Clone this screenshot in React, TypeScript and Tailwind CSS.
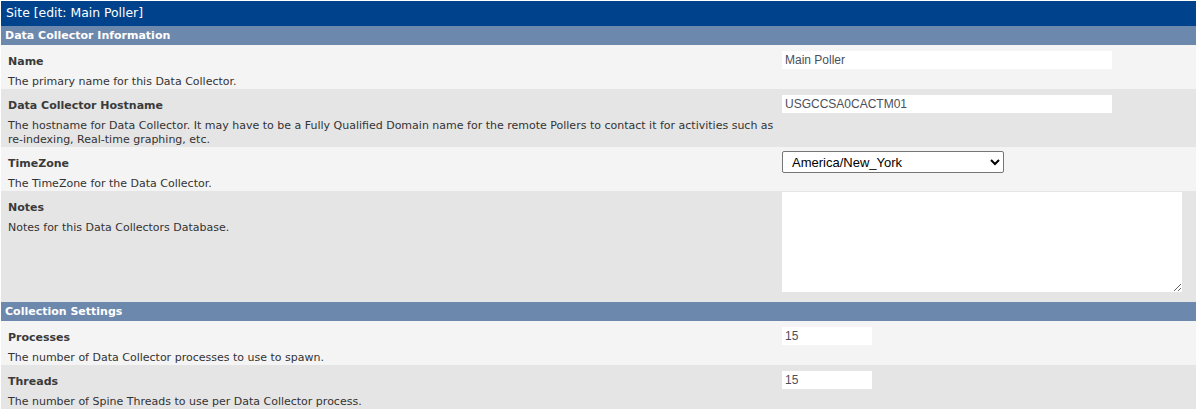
import type { ReactNode } from "react";

const font = { fontFamily: "Verdana, 'DejaVu Sans', sans-serif" };

function SectionBar({ title }: { title: string }) {
  return (
    <div className="h-[19px] bg-[#6d88ad] pl-[4px] text-[11px] font-bold leading-[19px] text-white">
      {title}
    </div>
  );
}

function Row({
  label,
  desc,
  even,
  children,
  rightClass,
}: {
  label: string;
  desc: string;
  even?: boolean;
  children: ReactNode;
  rightClass: string;
}) {
  return (
    <div className={`flex ${even ? "bg-[#e5e5e5]" : "bg-[#f4f4f4]"}`}>
      <div className="w-[781px] shrink-0 pl-[7px] pr-[4px] pt-[10px]">
        <div className="text-[11px] font-bold leading-[13px] text-[#3a3a3a]">{label}</div>
        <div className="mt-[7px] text-[11px] leading-[14px] text-[#333]">{desc}</div>
      </div>
      <div className={`flex-1 ${rightClass}`}>{children}</div>
    </div>
  );
}

const inputCls =
  "block h-[18px] bg-white px-[3px] text-[12px] text-[#4a4f5a] outline-none";
const inputFont = { fontFamily: "'Liberation Sans', Arial, sans-serif" };

export default function App() {
  return (
    <div className="min-h-screen bg-white pt-[1px] pl-[1px] pr-[2px]" style={font}>
      <div className="h-[25px] bg-[#00438c] pl-[5px] text-[12.4px] leading-[24px] text-white">
        Site [edit: Main Poller]
      </div>
      <SectionBar title="Data Collector Information" />
      <Row label="Name" desc="The primary name for this Data Collector." rightClass="pt-[6px]">
        <input
          className={`${inputCls} w-[330px]`}
          style={inputFont}
          defaultValue="Main Poller"
        />
      </Row>
      <Row
        even
        label="Data Collector Hostname"
        desc="The hostname for Data Collector. It may have to be a Fully Qualified Domain name for the remote Pollers to contact it for activities such as re-indexing, Real-time graphing, etc."
        rightClass="pt-[6px]"
      >
        <input
          className={`${inputCls} w-[330px]`}
          style={inputFont}
          defaultValue="USGCCSA0CACTM01"
        />
      </Row>
      <Row label="TimeZone" desc="The TimeZone for the Data Collector." rightClass="pt-[4px]">
        <select
          className="block h-[22px] w-[222px] rounded-[2px] border border-[#767676] bg-white pl-[5px] text-[13px] text-black"
          style={inputFont}
          defaultValue="America/New_York"
        >
          <option>America/New_York</option>
          <option>America/Chicago</option>
          <option>UTC</option>
        </select>
      </Row>
      <Row
        even
        label="Notes"
        desc="Notes for this Data Collectors Database."
        rightClass="pt-[1px] pb-[10px]"
      >
        <textarea
          className="block h-[100px] w-[400px] bg-white p-[3px] text-[12px] text-[#555] outline-none"
          style={inputFont}
        />
      </Row>
      <SectionBar title="Collection Settings" />
      <Row
        label="Processes"
        desc="The number of Data Collector processes to use to spawn."
        rightClass="pt-[6px]"
      >
        <input className={`${inputCls} w-[90px]`} style={inputFont} defaultValue="15" />
      </Row>
      <Row
        even
        label="Threads"
        desc="The number of Spine Threads to use per Data Collector process."
        rightClass="pt-[6px]"
      >
        <input className={`${inputCls} w-[90px]`} style={inputFont} defaultValue="15" />
      </Row>
    </div>
  );
}
